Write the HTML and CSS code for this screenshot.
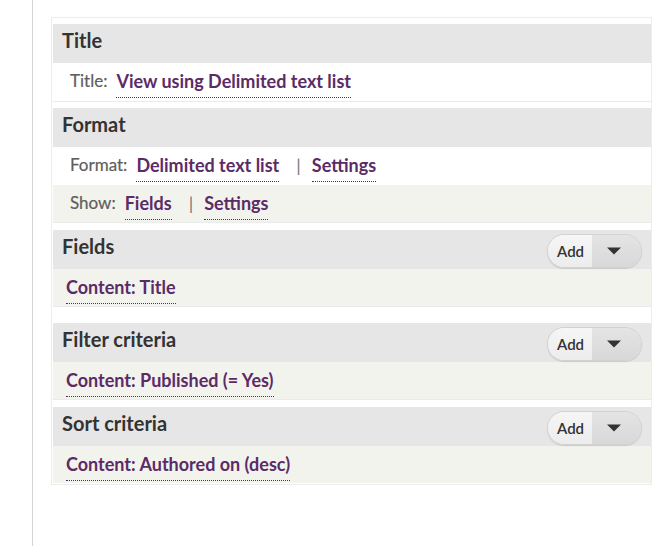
FILE: index.html
```html
<!DOCTYPE html>
<html>
<head>
<meta charset="utf-8">
<link rel="stylesheet" href="styles.css">
</head>
<body>
<div class="page">
  <div class="panel">
    <section class="sec sec-first">
      <div class="sec-head"><h3>Title</h3></div>
      <div class="row"><span class="label">Title:</span><a class="lnk" href="#">View using Delimited text list</a></div>
    </section>
    <section class="sec">
      <div class="sec-head"><h3>Format</h3></div>
      <div class="row"><span class="label">Format:</span><a class="lnk" href="#">Delimited text list</a><span class="sep">|</span><a class="lnk" href="#">Settings</a></div>
      <div class="row tint"><span class="label">Show:</span><a class="lnk" href="#">Fields</a><span class="sep">|</span><a class="lnk" href="#">Settings</a></div>
    </section>
    <section class="sec sec-wide">
      <div class="sec-head"><h3>Fields</h3>
        <div class="addbtn"><span class="add">Add</span><span class="drop"><svg width="16" height="8" viewBox="0 0 16 8"><path d="M1 0.5 H15 L8 7.5 Z" fill="#333"/></svg></span></div>
      </div>
      <div class="row tint item"><a class="lnk" href="#">Content: Title</a></div>
    </section>
    <section class="sec">
      <div class="sec-head"><h3>Filter criteria</h3>
        <div class="addbtn"><span class="add">Add</span><span class="drop"><svg width="16" height="8" viewBox="0 0 16 8"><path d="M1 0.5 H15 L8 7.5 Z" fill="#333"/></svg></span></div>
      </div>
      <div class="row tint item"><a class="lnk" href="#">Content: Published (= Yes)</a></div>
    </section>
    <section class="sec sec-last">
      <div class="sec-head"><h3>Sort criteria</h3>
        <div class="addbtn"><span class="add">Add</span><span class="drop"><svg width="16" height="8" viewBox="0 0 16 8"><path d="M1 0.5 H15 L8 7.5 Z" fill="#333"/></svg></span></div>
      </div>
      <div class="row tint item"><a class="lnk" href="#">Content: Authored on (desc)</a></div>
    </section>
  </div>
</div>
</body>
</html>
```
FILE: styles.css
```css
html, body {
  margin: 0;
  padding: 0;
  background: #fff;
  font-family: Lato, "Open Sans", "Liberation Sans", sans-serif;
  color: #333;
}
.page {
  margin-left: 32px;
  border-left: 1px solid #d4d4d4;
  min-height: 546px;
  box-sizing: border-box;
  padding: 17px 0 0 18px;
}
.panel {
  width: 601px;
  box-sizing: border-box;
  border: 1px solid #ececec;
  padding: 6px 0 0 1px;
}
.sec {
  border-bottom: 1px solid #ebebeb;
  margin-bottom: 7px;
}
.sec-first {
  margin-bottom: 6px;
}
.sec-wide {
  margin-bottom: 16px;
}
.sec-last {
  border-bottom: 0;
  margin-bottom: 0;
  padding-bottom: 1px;
}
.sec-head {
  height: 39px;
  box-sizing: border-box;
  background: #e6e6e6;
  padding: 4px 9px 0 9px;
  display: flex;
  align-items: flex-start;
  justify-content: space-between;
}
.sec-head h3 {
  margin: 0;
  font-size: 20px;
  line-height: 24px;
  font-weight: 700;
  color: #333;
}
.row {
  height: 38px;
  box-sizing: border-box;
  padding: 7px 0 0 17px;
  display: flex;
  align-items: flex-start;
  font-size: 18px;
  line-height: 22px;
}
.tint {
  height: 37px;
  background: #f3f3ee;
}
.item {
  padding-left: 13px;
}
.label {
  color: #5e5e5e;
  font-size: 17px;
  font-weight: 400;
  margin-right: 9px;
  -webkit-text-stroke: 0.2px #5e5e5e;
}
.lnk {
  color: #5b2b67;
  font-weight: 700;
  text-decoration: none;
  padding-bottom: 5px;
  border-bottom: 1px dotted #5b2b67;
}
.sep {
  color: #777;
  margin: 0 11px 0 17px;
}
.addbtn {
  display: flex;
  height: 34px;
  box-sizing: border-box;
  border: 1px solid #d2d2d2;
  border-radius: 17px;
  overflow: hidden;
  box-shadow: 0 1px 1px rgba(0,0,0,0.12);
}
.add {
  width: 44px;
  background: linear-gradient(#f6f6f6, #ececec);
  font-size: 15px;
  font-weight: 600;
  color: #333;
  line-height: 32px;
  padding-left: 9px;
  box-sizing: border-box;
}
.drop {
  width: 49px;
  background: linear-gradient(#e4e4e4, #d8d8d8);
  display: flex;
  align-items: center;
  justify-content: center;
  padding-right: 6px;
  box-sizing: border-box;
}
.drop svg {
  display: block;
}
```
